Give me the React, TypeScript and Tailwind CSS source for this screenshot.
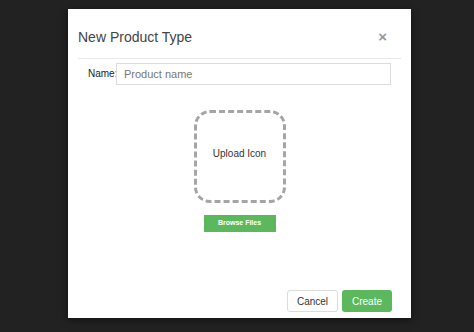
export default function App() {
  return (
    <div
      className="w-[474px] h-[332px] bg-[#222222] pt-[9px] pl-[68px]"
      style={{ fontFamily: '"Liberation Sans", Arial, sans-serif' }}
    >
      <div className="w-[343px] h-[309px] bg-white flex flex-col shadow-[0_2px_8px_rgba(0,0,0,0.5)]">
        {/* Header */}
        <div className="mx-[10px] h-[50px] border-b border-[#e8e8e8] flex items-center justify-between pt-[6px]">
          <h1 className="text-[14px] text-[#444] leading-none">New Product Type</h1>
          <span className="text-[15px] font-bold text-[#999] leading-none mr-[14px]">×</span>
        </div>

        {/* Name row */}
        <div className="flex items-start pl-[20px] pr-[20px] mt-[4px]">
          <label className="text-[10px] text-[#222] mt-[3px] w-[28px]">Name:</label>
          <input
            className="flex-1 h-[22px] border border-[#dcdcdc] px-[7px] text-[11px] text-[#333] placeholder:text-[#777] outline-none"
            placeholder="Product name"
          />
        </div>

        {/* Upload */}
        <div className="flex flex-col items-center mt-[25px]">
          <div className="w-[92px] h-[93px] border-[3px] border-dashed border-[#a5a5a5] rounded-[16px] flex items-center justify-center pb-[6px]">
            <span className="text-[10px] text-[#333]">Upload Icon</span>
          </div>
          <button className="mt-[12px] w-[72px] h-[17px] bg-[#5cb85c] text-white text-[7px] font-bold flex items-center justify-center">
            Browse Files
          </button>
        </div>

        <div className="flex-1" />

        {/* Footer */}
        <div className="flex justify-end gap-[4px] pr-[19px] pb-[6px]">
          <button className="w-[51px] h-[22px] bg-white border border-[#dcdcdc] rounded-[3px] text-[10px] text-[#333]">
            Cancel
          </button>
          <button className="w-[50px] h-[22px] bg-[#5cb85c] rounded-[3px] text-[10px] text-white">
            Create
          </button>
        </div>
      </div>
    </div>
  );
}
